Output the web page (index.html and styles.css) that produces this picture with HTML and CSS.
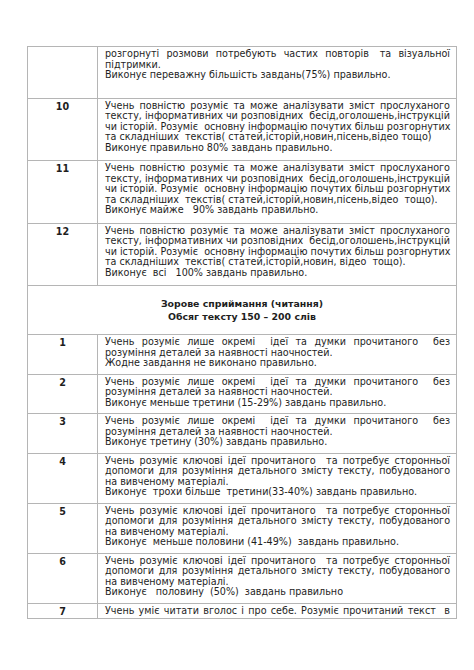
FILE: index.html
```html
<!DOCTYPE html>
<html lang="uk">
<head>
<meta charset="utf-8">
<title>Критерії оцінювання</title>
<link rel="stylesheet" href="styles.css">
</head>
<body>
<div class="page">
<table class="grid">
<colgroup><col class="c-num"><col class="c-text"></colgroup>
<tr class="r9">
<td class="num"></td>
<td class="desc"><div class="j">розгорнуті  розмови  потребують  частих  повторів   та  візуальної</div><div class="l">підтримки.</div><div class="l">Виконує переважну більшість завдань(75%) правильно.</div><div class="l gap"> </div></td>
</tr>
<tr class="r5l">
<td class="num">10</td>
<td class="desc"><div class="j">Учень повністю розуміє та може аналізувати зміст прослуханого</div><div class="j">тексту, інформативних чи розповідних  бесід,оголошень,інструкцій</div><div class="j">чи історій. Розуміє  основну інформацію почутих більш розгорнутих</div><div class="l">та складніших  текстів( статей,історій,новин,пісень,відео тощо)</div><div class="l">Виконує правильно 80% завдань правильно.</div></td>
</tr>
<tr class="r5l">
<td class="num">11</td>
<td class="desc"><div class="j">Учень повністю розуміє та може аналізувати зміст прослуханого</div><div class="j">тексту, інформативних чи розповідних  бесід,оголошень,інструкцій</div><div class="j">чи історій. Розуміє  основну інформацію почутих більш розгорнутих</div><div class="l">та складніших  текстів( статей,історій,новин,пісень,відео  тощо).</div><div class="l">Виконує майже   90% завдань правильно.</div></td>
</tr>
<tr class="r5l">
<td class="num">12</td>
<td class="desc"><div class="j">Учень повністю розуміє та може аналізувати зміст прослуханого</div><div class="j">тексту, інформативних чи розповідних  бесід,оголошень,інструкцій</div><div class="j">чи історій. Розуміє  основну інформацію почутих більш розгорнутих</div><div class="l">та складніших  текстів( статей,історій,новин, відео  тощо).</div><div class="l">Виконує  всі   100% завдань правильно.</div></td>
</tr>
<tr>
<td class="head" colspan="2"><div>Зорове сприймання (читання)</div><div>Обсяг тексту 150 – 200 слів</div></td>
</tr>
<tr>
<td class="num">1</td>
<td class="desc"><div class="j">Учень розуміє лише окремі  ідеї та думки прочитаного  без</div><div class="l">розуміння деталей за наявності наочностей.</div><div class="l">Жодне завдання не виконано правильно.</div></td>
</tr>
<tr>
<td class="num">2</td>
<td class="desc"><div class="j">Учень розуміє лише окремі  ідеї та думки прочитаного  без</div><div class="l">розуміння деталей за наявності наочностей.</div><div class="l">Виконує меньше третини (15-29%) завдань правильно.</div></td>
</tr>
<tr>
<td class="num">3</td>
<td class="desc"><div class="j">Учень розуміє лише окремі  ідеї та думки прочитаного  без</div><div class="l">розуміння деталей за наявності наочностей.</div><div class="l">Виконує третину (30%) завдань правильно.</div></td>
</tr>
<tr>
<td class="num">4</td>
<td class="desc"><div class="j">Учень розуміє ключові ідеї прочитаного  та потребує сторонньої</div><div class="j">допомоги для розуміння детального змісту тексту, побудованого</div><div class="l">на вивченому матеріалі.</div><div class="l">Виконує  трохи більше  третини(33-40%) завдань правильно.</div></td>
</tr>
<tr>
<td class="num">5</td>
<td class="desc"><div class="j">Учень розуміє ключові ідеї прочитаного  та потребує сторонньої</div><div class="j">допомоги для розуміння детального змісту тексту, побудованого</div><div class="l">на вивченому матеріалі.</div><div class="l">Виконує  меньше половини (41-49%)  завдань правильно.</div></td>
</tr>
<tr>
<td class="num">6</td>
<td class="desc"><div class="j">Учень розуміє ключові ідеї прочитаного  та потребує сторонньої</div><div class="j">допомоги для розуміння детального змісту тексту, побудованого</div><div class="l">на вивченому матеріалі.</div><div class="l">Виконує   половину  (50%)  завдань правильно</div></td>
</tr>
<tr class="last">
<td class="num">7</td>
<td class="desc"><div class="j">Учень уміє читати вголос і про себе. Розуміє прочитаний текст  в</div></td>
</tr>
</table>
</div>
</body>
</html>
```

FILE: styles.css
```css
html, body {
  margin: 0;
  padding: 0;
  background: #ffffff;
}

body {
  font-family: "DejaVu Sans", "Noto Sans", sans-serif;
  color: #1e1e1e;
}

.page {
  padding: 46px 17px 0 27px;
}

.grid {
  border-collapse: collapse;
  table-layout: fixed;
  width: 430px;
}

.c-num {
  width: 70px;
}

.grid td {
  border: 1px solid #b5b5b5;
  vertical-align: top;
  font-size: 9.6px;
  line-height: 10.5px;
}

.num {
  text-align: center;
  font-weight: bold;
  padding: 3px 2px 5px 2px;
}

.desc {
  padding: 2px 6px 5px 7px;
}

.r5l .desc {
  padding-bottom: 7px;
}

.j {
  white-space: pre;
  text-align: justify;
  text-align-last: justify;
}

.l {
  white-space: pre;
  text-align: left;
}

.gap {
  height: 12px;
}

.grid .head {
  text-align: center;
  font-weight: bold;
  font-size: 9.4px;
  line-height: 13px;
  padding: 11px 6px 11px 6px;
}

.last .desc {
  padding-bottom: 1px;
}

.last .num {
  padding-bottom: 1px;
}
```
